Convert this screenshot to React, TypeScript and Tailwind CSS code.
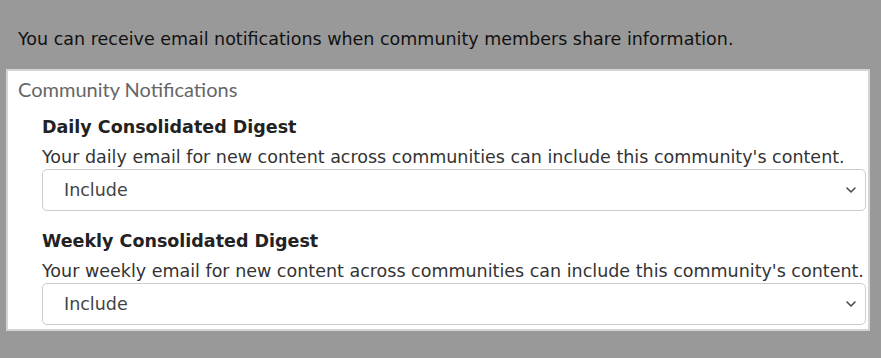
import { ChevronDown } from "lucide-react";

const digests = [
  {
    title: "Daily Consolidated Digest",
    text: "Your daily email for new content across communities can include this community's content.",
  },
  {
    title: "Weekly Consolidated Digest",
    text: "Your weekly email for new content across communities can include this community's content.",
  },
];

function DigestSelect() {
  return (
    <div className="relative">
      <select
        defaultValue="include"
        className="w-full h-[42px] appearance-none rounded-[5px] border border-[#cccccc] bg-white pl-[21px] pr-8 text-[17.5px] text-[#444] outline-none"
      >
        <option value="include">Include</option>
        <option value="exclude">Exclude</option>
      </select>
      <ChevronDown
        className="pointer-events-none absolute right-[7px] top-1/2 -translate-y-1/2 text-[#444]"
        size={16}
        strokeWidth={2.25}
      />
    </div>
  );
}

export default function App() {
  return (
    <div
      className="h-screen bg-[#999999] pt-[27px]"
      style={{ fontFamily: '"DejaVu Sans", Verdana, sans-serif' }}
    >
      <p className="px-[18px] text-[17.5px] leading-6 text-[#111] whitespace-nowrap">
        You can receive email notifications when community members share information.
      </p>

      {/* Notifications panel */}
      <div className="ml-[6px] mt-[18px] w-[864px] border-2 border-[#d4d4d4] bg-white pl-[10px] pr-[2px] pt-[5px] pb-[4px]">
        <div
          className="text-[20px] leading-[27px] text-[#666]"
          style={{ fontFamily: "Lato, sans-serif" }}
        >
          Community Notifications
        </div>
        <div className="mt-[12px] flex flex-col gap-[18px] pl-[24px]">
          {digests.map((d) => (
            <div key={d.title}>
              <div className="text-[17.5px] font-bold leading-6 text-[#222]">{d.title}</div>
              <div className="mt-[6px] text-[17.5px] leading-6 text-[#333] whitespace-nowrap">
                {d.text}
              </div>
              <DigestSelect />
            </div>
          ))}
        </div>
      </div>
    </div>
  );
}
